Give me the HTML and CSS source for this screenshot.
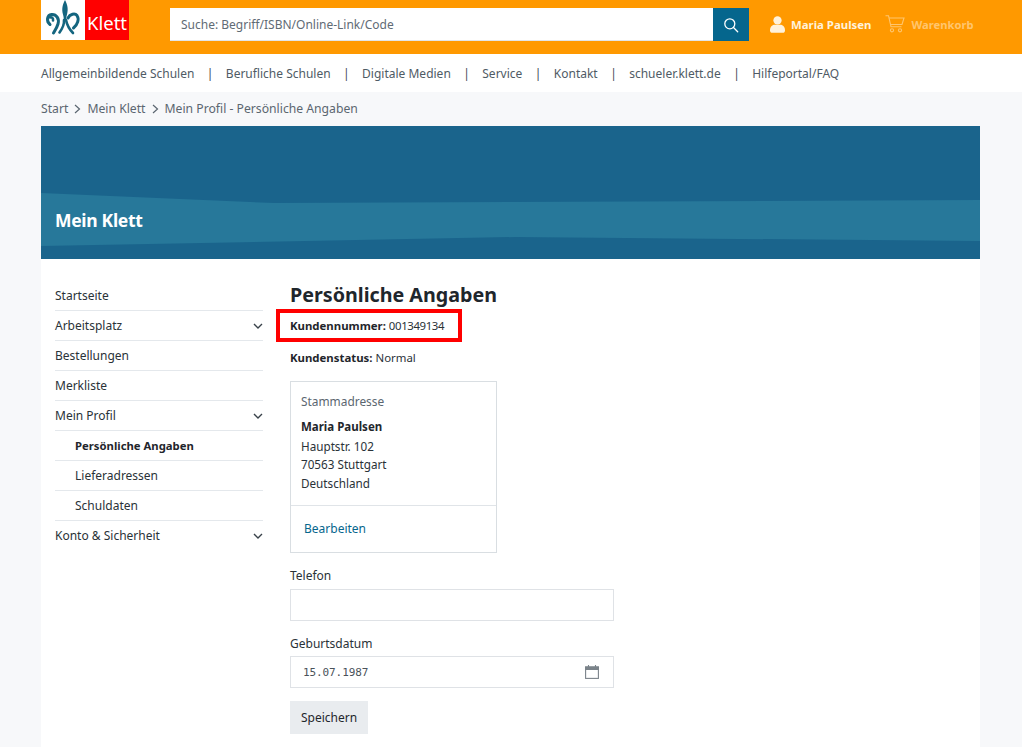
FILE: index.html
```html
<!DOCTYPE html>
<html lang="de">
<head>
<meta charset="utf-8">
<title>Mein Klett</title>
<link rel="stylesheet" href="styles.css">
</head>
<body>
<header class="topbar">
  <a class="logo" href="#">
    <span class="logo-mark">
      <svg width="44" height="40" viewBox="0 0 44 40" fill="none" stroke="#14657f" stroke-linecap="round">
        <path d="M24 0C21.500 5 20.500 9 22 14.500C22.700 17 23 19 22.500 21L25.500 21C25 19 25.300 17 26 14.500C27.500 9 26.500 5 24 0Z" fill="#14657f" stroke="none"/>
        <path d="M9 24.500C5 21.500 6 15 10.500 14.500C15.500 14 18.500 19 17 24C16 27.500 14 30.500 12.500 33" stroke-width="3"/>
        <path d="M9 17.500C10.500 16.800 12.500 18 12 20.500" stroke-width="2.600"/>
        <path d="M23 20C23.500 25 21 29 18.500 32.500" stroke-width="2.600"/>
        <path d="M25 20C26 25 28 29 32 33" stroke-width="2.600"/>
        <path d="M27 18C29 14 34 13 36 15.500C38.500 19 36.500 25 32.500 28" stroke-width="3"/>
      </svg>
    </span>
    <span class="logo-word">Klett</span>
  </a>
  <form class="search">
    <span class="search-field">Suche: Begriff/ISBN/Online-Link/Code</span>
    <span class="search-btn">
      <svg width="16" height="16" viewBox="0 0 16 16" fill="none" stroke="#fff" stroke-width="1.300"><circle cx="6.800" cy="6.800" r="5"/><path d="M10.500 10.500l4.200 4.200" stroke-linecap="round"/></svg>
    </span>
  </form>
  <a class="user" href="#">
    <svg width="15" height="17" viewBox="0 0 16 18" fill="#fff2dc"><circle cx="8" cy="4.600" r="4.400"/><path d="M0 15c0-4 3-5.800 5-5.800h6c2 0 5 1.800 5 5.800 0 2-1 2.800-2.500 2.800h-11C1 17.800 0 17 0 15z"/></svg>
    <span>Maria Paulsen</span>
  </a>
  <a class="cart" href="#">
    <svg width="20" height="18" viewBox="0 0 20 18" fill="none" stroke="#ffc56d" stroke-width="1.100"><path d="M0.500 0.700h3l2.500 11h10.500"/><path d="M4 3h15l-2 6.500H5.500"/><circle cx="7" cy="15.300" r="1.600"/><circle cx="15" cy="15.300" r="1.600"/></svg>
    <span>Warenkorb</span>
  </a>
</header>

<nav class="mainnav">
  <a href="#">Allgemeinbildende Schulen</a><i>|</i>
  <a href="#">Berufliche Schulen</a><i>|</i>
  <a href="#">Digitale Medien</a><i>|</i>
  <a href="#">Service</a><i>|</i>
  <a href="#">Kontakt</a><i>|</i>
  <a href="#">schueler.klett.de</a><i>|</i>
  <a href="#">Hilfeportal/FAQ</a>
</nav>

<div class="crumbs">
  <a href="#">Start</a>
  <svg class="crumb-sep" width="7" height="10" viewBox="0 0 7 10" fill="none" stroke="#5b6670" stroke-width="1.200"><path d="M1 1l4.500 4L1 9"/></svg>
  <a href="#">Mein Klett</a>
  <svg class="crumb-sep" width="7" height="10" viewBox="0 0 7 10" fill="none" stroke="#5b6670" stroke-width="1.200"><path d="M1 1l4.500 4L1 9"/></svg>
  <a href="#">Mein Profil - Persönliche Angaben</a>
</div>

<section class="hero">
  <svg class="hero-wave" width="939" height="133" viewBox="0 0 939 133" preserveAspectRatio="none">
    <path d="M0 67 L233 77 L939 74 L939 115 L474 111 L0 120Z" fill="#27789a"/>
  </svg>
  <h2 class="hero-title">Mein Klett</h2>
</section>

<main class="content">
  <aside class="sidenav">
    <a class="side-item" href="#">Startseite</a>
    <a class="side-item" href="#">Arbeitsplatz<svg class="chev" width="10" height="6" viewBox="0 0 10 6" fill="none" stroke="#39424a" stroke-width="1.400"><path d="M1 1l4 4 4-4"/></svg></a>
    <a class="side-item" href="#">Bestellungen</a>
    <a class="side-item" href="#">Merkliste</a>
    <a class="side-item" href="#">Mein Profil<svg class="chev" width="10" height="6" viewBox="0 0 10 6" fill="none" stroke="#39424a" stroke-width="1.400"><path d="M1 1l4 4 4-4"/></svg></a>
    <a class="side-item sub active" href="#">Persönliche Angaben</a>
    <a class="side-item sub" href="#">Lieferadressen</a>
    <a class="side-item sub" href="#">Schuldaten</a>
    <a class="side-item last" href="#">Konto &amp; Sicherheit<svg class="chev" width="10" height="6" viewBox="0 0 10 6" fill="none" stroke="#39424a" stroke-width="1.400"><path d="M1 1l4 4 4-4"/></svg></a>
  </aside>

  <div class="profile">
    <h1 class="title">Persönliche Angaben</h1>
    <p class="meta meta-first"><b>Kundennummer:</b> <span class="number">001349134</span><span class="highlight"></span></p>
    <p class="meta"><b>Kundenstatus:</b> Normal</p>

    <div class="card">
      <div class="card-body">
        <div class="card-title">Stammadresse</div>
        <address class="addr"><b>Maria Paulsen</b><br>Hauptstr. 102<br>70563 Stuttgart<br>Deutschland</address>
      </div>
      <div class="card-foot"><a href="#">Bearbeiten</a></div>
    </div>

    <label class="label">Telefon</label>
    <div class="input"></div>
    <label class="label label-date">Geburtsdatum</label>
    <div class="input input-date">
      <span class="date">15.07.1987</span>
      <svg width="14" height="14" viewBox="0 0 14 14" fill="none" stroke="#7b838a" stroke-width="1.100"><rect x="0.600" y="2" width="12.800" height="11.400"/><path d="M0.600 2h12.800v2.500H0.600z" fill="#7b838a"/><path d="M3.500 0v2M10.500 0v2"/></svg>
    </div>
    <button class="save" type="button">Speichern</button>
  </div>
</main>
</body>
</html>
```

FILE: styles.css
```css
* { box-sizing: border-box; }
html, body { margin: 0; height: 747px; overflow: hidden; }
body {
  background: #f7f8fa;
  font-family: "Noto Sans", "Open Sans", sans-serif;
  font-size: 12px;
  color: #1f262c;
}
a { color: inherit; text-decoration: none; }

.topbar {
  height: 54px;
  background: #ff9900;
  display: flex;
  align-items: flex-start;
  padding-left: 41px;
}
.logo { display: flex; height: 40px; width: 88px; }
.logo-mark { width: 44px; background: #fff; display: flex; }
.logo-word {
  width: 44px; background: #f00; color: #fff;
  font-size: 18.500px; line-height: 46px; text-align: center;
}
.search { display: flex; margin: 8px 0 0 41px; width: 579px; height: 33px; }
.search-field {
  flex: 1; background: #fff; color: #5f6b75; line-height: 33px;
  padding-left: 11px; font-size: 12px;
  border-bottom: 1px solid #e2e5e8;
}
.search-btn { width: 36px; background: #05668d; display: flex; align-items: center; justify-content: center; }
.user, .cart { display: flex; align-items: center; font-weight: 700; height: 18px; margin-top: 15px; }
.user { margin-left: 21px; color: #fff2dc; gap: 6px; font-size: 11.400px; }
.cart { margin-left: 14px; color: #ffc56d; gap: 6px; font-size: 11.200px; }
.cart span { margin-top: 1px; }

.mainnav {
  height: 38px; background: #fff; display: flex; align-items: center;
  padding-left: 41px; color: #4f5b65; font-size: 12px;
}
.mainnav i { font-style: normal; margin: 0 12.430px; color: #3f4a54; }

.crumbs {
  height: 33px; display: flex; align-items: center; gap: 6px;
  padding-left: 41px; color: #5b6670; font-size: 12.200px;
  margin-bottom: 1px;
}
.crumb-sep { margin-top: 1px; }

.hero {
  position: relative; margin: 0 42px 0 41px; height: 133px; background: #1a648c;
  display: flex; align-items: center; padding: 64px 14px 9px;
}
.hero-wave { position: absolute; left: 0; top: 0; }
.hero-title { position: relative; margin: 0; color: #fff; font-size: 17.500px; font-weight: 700; letter-spacing: -.3px; }

.content {
  margin: 0 42px 0 41px; height: 488px; background: #fff;
  display: flex; padding: 22px 14px 0;
}
.sidenav { width: 208px; display: flex; flex-direction: column; }
.side-item {
  height: 30px; display: flex; align-items: center; justify-content: space-between;
  border-bottom: 1px solid #e4e8ec; color: #2a3238; font-size: 12px;
}
.side-item.sub { padding-left: 20px; }
.side-item.active { font-weight: 700; color: #1f262c; font-size: 11.300px; }
.side-item.last { border-bottom-color: transparent; }

.profile { margin-left: 27px; width: 324px; display: flex; flex-direction: column; align-items: flex-start; }
.title { margin: 0; font-size: 19.700px; line-height: 27px; font-weight: 700; color: #1f262c; }
.meta { position: relative; margin: 0; font-size: 11.400px; line-height: 16px; color: #2a3238; }
.meta b { color: #1f262c; }
.number { letter-spacing: -.38px; }
.meta-first { margin-top: 10px; margin-bottom: 16px; }
.highlight {
  position: absolute; left: -14px; top: -9px; width: 186px; height: 33px;
  border: 4px solid #f00;
}
.card { margin-top: 15px; width: 207px; height: 172px; background: #fff; border: 1px solid #d9dee2; display: flex; flex-direction: column; }
.card-body { height: 124px; border-bottom: 1px solid #e0e4e8; padding: 10px 10px 0; }
.card-title { color: #5b6670; font-size: 11.900px; line-height: 18px; }
.addr { font-style: normal; font-size: 11.700px; line-height: 18.600px; margin-top: 7px; color: #2a3238; }
.addr b { color: #1f262c; font-size: 11.500px; }
.card-foot { padding: 14px 13px 0; color: #05668d; font-size: 12px; line-height: 18px; }

.label { display: block; margin-top: 14px; font-size: 12px; line-height: 18px; color: #2a3238; }
.label-date { margin-top: 14px; }
.input { margin-top: 4px; width: 324px; height: 32px; border: 1px solid #dfe2e6; background: #fff; display: flex; align-items: center; justify-content: space-between; }
.input-date { margin-top: 3px; padding: 0 14px 0 12px; }
.date { font-family: "DejaVu Sans Mono", "Liberation Mono", monospace; font-size: 11px; letter-spacing: -.1px; color: #4a525a; }
.save {
  margin-top: 13px; width: 78px; height: 33px; border: 0; background: #e9ecef;
  font: inherit; font-size: 12px; color: #1f262c; padding: 0;
}
```
